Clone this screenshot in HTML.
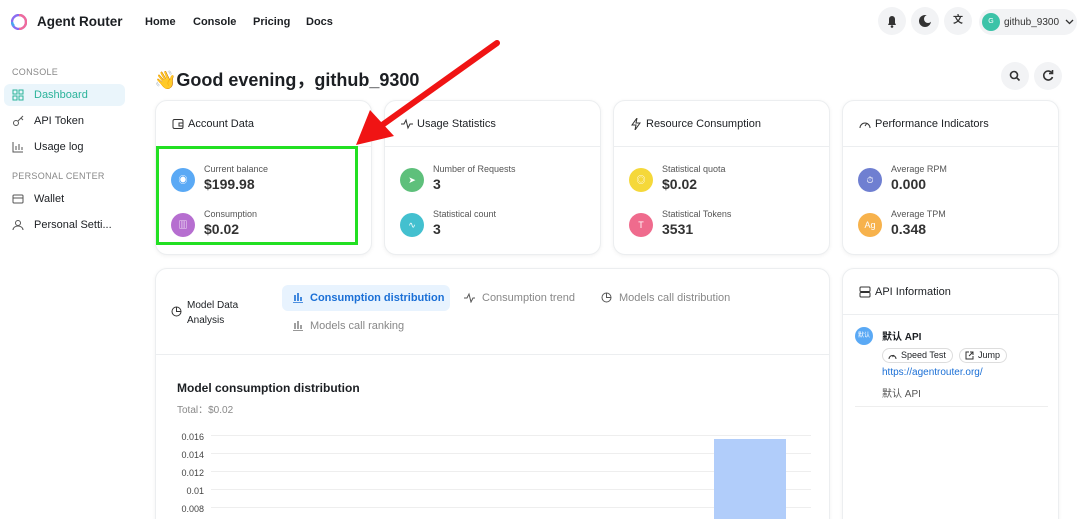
<!DOCTYPE html>
<html><head><meta charset="utf-8"><style>
*{box-sizing:border-box;margin:0;padding:0}
html,body{width:1080px;height:519px;overflow:hidden}
body{background:#fff;font-family:"Liberation Sans","Noto Sans CJK SC",sans-serif;color:#1c1f23;position:relative}
.abs{position:absolute}
.nav a{position:absolute;top:16px;font-size:11px;font-weight:bold;color:#1c1f23}
.side .lbl{position:absolute;left:12px;font-size:9px;color:#888;letter-spacing:.3px}
.side .it{position:absolute;left:4px;width:121px;height:22px;font-size:11px;line-height:22px;padding-left:30px;color:#1c1f23}
.side .it svg{position:absolute;left:8px;top:5px}
.card{position:absolute;background:#fff;border:1px solid #eceef0;border-radius:12px;box-shadow:0 1px 4px rgba(0,0,0,.06)}
.card .hd{height:46px;border-bottom:1px solid #eceef0;font-size:11px;line-height:46px;padding-left:32px;position:relative}
.card .hd svg{position:absolute;left:16px;top:17px}
.row{position:absolute;left:15px}
.ic{position:absolute;left:0;width:24px;height:24px;border-radius:50%;color:#fff;font-size:9px;text-align:center;line-height:24px}
.row .t{position:absolute;left:33px;top:-4px;font-size:9px;color:#555;white-space:nowrap}
.row .v{position:absolute;left:33px;top:8px;font-size:14px;font-weight:bold;color:#333;white-space:nowrap}
.cb{position:absolute;width:28px;height:28px;border-radius:50%;background:#f2f3f5}
.tab{position:absolute;font-size:11px;color:#888;height:26px;line-height:26px;padding-left:28px}
.tab svg{position:absolute;left:10px;top:7px}
</style></head><body>
<svg class="abs" style="left:11px;top:14px" width="16" height="16" viewBox="0 0 16 16"><circle cx="8" cy="8" r="7" fill="none" stroke="#8b6cf0" stroke-width="2.4"/><path d="M8 1a7 7 0 0 1 0 14" fill="none" stroke="#f06a9b" stroke-width="2.4"/><path d="M3 12a7 7 0 0 1-2-4" fill="none" stroke="#4aa6f0" stroke-width="2.4"/></svg>
<div class="abs" style="left:37px;top:14px;font-size:13.5px;font-weight:bold;color:#1c1f23">Agent Router</div>
<div class="nav"><a style="left:145px">Home</a><a style="left:193px">Console</a><a style="left:253px">Pricing</a><a style="left:306px">Docs</a></div>
<div class="cb" style="left:878px;top:7px"><svg width="28" height="28"><path d="M10 18h8l-1-2v-4a3 3 0 0 0-6 0v4z" fill="#333"/><circle cx="14" cy="19.5" r="1.3" fill="#333"/></svg></div>
<div class="cb" style="left:911px;top:7px"><svg width="28" height="28"><circle cx="14" cy="14" r="6" fill="#333"/><circle cx="17" cy="12" r="4" fill="#f2f3f5"/></svg></div>
<div class="cb" style="left:944px;top:7px;font-size:10px;text-align:center;line-height:28px;font-weight:bold;color:#333">文</div>
<div class="abs" style="left:979px;top:9px;width:98px;height:26px;border-radius:13px;background:#f2f3f5"></div>
<div class="abs" style="left:982px;top:13px;width:18px;height:18px;border-radius:50%;background:#3cc3a8;color:#fff;font-size:7px;text-align:center;line-height:18px">G</div>
<div class="abs" style="left:1004px;top:17px;font-size:10px;color:#333">github_9300</div>
<svg class="abs" style="left:1065px;top:19px" width="9" height="6"><path d="M1 1l3.5 3.5L8 1" fill="none" stroke="#333" stroke-width="1.3"/></svg>
<div class="side">
<div class="lbl" style="top:67px">CONSOLE</div>
<div class="it" style="top:84px;background:#eaf5fb;border-radius:6px;color:#2bb39a"><svg width="12" height="12"><rect x="1" y="1" width="4" height="4" fill="none" stroke="#2bb39a"/><rect x="7" y="1" width="4" height="4" fill="none" stroke="#2bb39a"/><rect x="1" y="7" width="4" height="4" fill="none" stroke="#2bb39a"/><rect x="7" y="7" width="4" height="4" fill="none" stroke="#2bb39a"/></svg>Dashboard</div>
<div class="it" style="top:110px"><svg width="12" height="12"><circle cx="4" cy="8" r="2.5" fill="none" stroke="#555"/><path d="M6 6l5-5M9 3l2 2" stroke="#555" fill="none"/></svg>API Token</div>
<div class="it" style="top:136px"><svg width="12" height="12"><path d="M1 1v10h10M4 9V5M7 9V3M10 9V6" stroke="#555" fill="none"/></svg>Usage log</div>
<div class="lbl" style="top:171px">PERSONAL CENTER</div>
<div class="it" style="top:188px"><svg width="12" height="12"><rect x="1" y="2" width="10" height="8" rx="1" fill="none" stroke="#555"/><path d="M1 5h10" stroke="#555"/></svg>Wallet</div>
<div class="it" style="top:214px"><svg width="12" height="12"><circle cx="6" cy="4" r="2.5" fill="none" stroke="#555"/><path d="M1 11a5 4 0 0 1 10 0" fill="none" stroke="#555"/></svg>Personal Setti...</div>
</div>
<div class="abs" style="left:154px;top:66px;font-size:18px;font-weight:bold">👋Good evening，github_9300</div>
<div class="cb" style="left:1001px;top:62px"><svg width="28" height="28"><circle cx="13" cy="13" r="3.5" fill="none" stroke="#333" stroke-width="1.6"/><path d="M15.5 15.5l3 3" stroke="#333" stroke-width="1.6"/></svg></div>
<div class="cb" style="left:1034px;top:62px"><svg width="28" height="28"><path d="M18 11a4.5 4.5 0 1 0 .5 4" fill="none" stroke="#333" stroke-width="1.6"/><path d="M18.5 8v3.5H15" fill="none" stroke="#333" stroke-width="1.6"/></svg></div>
<div class="card" style="left:155px;top:100px;width:217px;height:155px"><div class="hd"><svg width="12" height="12"><rect x="1" y="1.5" width="10" height="9" rx="1.5" fill="none" stroke="#333"/><path d="M7 5h4v3H7z" fill="none" stroke="#333"/></svg>Account Data</div>
<div class="row" style="top:67px"><div class="ic" style="background:#5aa9f5">◉</div><div class="t">Current balance</div><div class="v">$199.98</div></div>
<div class="row" style="top:112px"><div class="ic" style="background:#b66ed0">▥</div><div class="t">Consumption</div><div class="v">$0.02</div></div></div>
<div class="card" style="left:384px;top:100px;width:217px;height:155px"><div class="hd"><svg width="12" height="12"><path d="M0 6h3l2-4 2 8 2-4h3" fill="none" stroke="#333"/></svg>Usage Statistics</div>
<div class="row" style="top:67px"><div class="ic" style="background:#5ec07b">➤</div><div class="t">Number of Requests</div><div class="v">3</div></div>
<div class="row" style="top:112px"><div class="ic" style="background:#43c0cf">∿</div><div class="t">Statistical count</div><div class="v">3</div></div></div>
<div class="card" style="left:613px;top:100px;width:217px;height:155px"><div class="hd"><svg width="12" height="12"><path d="M7 0L2 7h4l-1 5 5-7H6z" fill="none" stroke="#333"/></svg>Resource Consumption</div>
<div class="row" style="top:67px"><div class="ic" style="background:#f5d83a">◎</div><div class="t">Statistical quota</div><div class="v">$0.02</div></div>
<div class="row" style="top:112px"><div class="ic" style="background:#ef6b8d">T</div><div class="t">Statistical Tokens</div><div class="v">3531</div></div></div>
<div class="card" style="left:842px;top:100px;width:217px;height:155px"><div class="hd"><svg width="12" height="12"><path d="M1 10a5 5 0 1 1 10 0M6 8l2-3" fill="none" stroke="#333"/></svg>Performance Indicators</div>
<div class="row" style="top:67px"><div class="ic" style="background:#6f7fd1">⏱</div><div class="t">Average RPM</div><div class="v">0.000</div></div>
<div class="row" style="top:112px"><div class="ic" style="background:#f7b24c">Ag</div><div class="t">Average TPM</div><div class="v">0.348</div></div></div>
<div class="card" style="left:155px;top:268px;width:675px;height:270px">
<div style="height:86px;border-bottom:1px solid #eceef0;position:relative">
<svg class="abs" style="left:15px;top:37px" width="11" height="11"><circle cx="5.5" cy="5.5" r="4.5" fill="none" stroke="#333"/><path d="M5.5 1v4.5H10" fill="none" stroke="#333"/></svg>
<div class="abs" style="left:31px;top:29px;font-size:10px;line-height:15px">Model Data<br>Analysis</div>
<div class="tab" style="left:126px;top:16px;width:168px;background:#e8f3fe;border-radius:6px;color:#1a6fd6;font-weight:bold"><svg width="11" height="11"><path d="M1 11h10M3 9V3M6 9V1M9 9V5" stroke="#1a6fd6" stroke-width="1.6"/></svg>Consumption distribution</div>
<div class="tab" style="left:298px;top:16px"><svg width="11" height="11"><path d="M0 6h3l2-4 2 8 2-4h2" fill="none" stroke="#555"/></svg>Consumption trend</div>
<div class="tab" style="left:435px;top:16px"><svg width="11" height="11"><circle cx="5.5" cy="5.5" r="4.5" fill="none" stroke="#555"/><path d="M5.5 1v4.5H10" fill="none" stroke="#555"/></svg>Models call distribution</div>
<div class="tab" style="left:126px;top:44px"><svg width="11" height="11"><path d="M1 11h10M3 9V3M6 9V1M9 9V5" stroke="#777" stroke-width="1.4"/></svg>Models call ranking</div>
</div>
<div class="abs" style="left:21px;top:112px;font-size:12px;font-weight:bold">Model consumption distribution</div>
<div class="abs" style="left:21px;top:132px;font-size:10px;color:#888">Total：$0.02</div>
<div class="abs" style="left:0;top:159px;width:48px;font-size:9px;color:#444;text-align:right;line-height:18px">0.016<br>0.014<br>0.012<br>0.01<br>0.008</div>
<div class="abs" style="left:55px;top:166px;width:600px;height:1px;background:#eee"></div>
<div class="abs" style="left:55px;top:184px;width:600px;height:1px;background:#eee"></div>
<div class="abs" style="left:55px;top:202px;width:600px;height:1px;background:#eee"></div>
<div class="abs" style="left:55px;top:220px;width:600px;height:1px;background:#eee"></div>
<div class="abs" style="left:55px;top:238px;width:600px;height:1px;background:#eee"></div>
<div class="abs" style="left:558px;top:170px;width:72px;height:90px;background:#b1cdfa"></div>
</div>
<div class="card" style="left:842px;top:268px;width:217px;height:270px">
<div class="hd" style="height:46px"><svg width="12" height="12"><rect x="1" y="1" width="10" height="4.5" rx="1" fill="none" stroke="#333"/><rect x="1" y="6.5" width="10" height="4.5" rx="1" fill="none" stroke="#333"/></svg>API Information</div>
<div class="abs" style="left:12px;top:58px;width:18px;height:18px;border-radius:50%;background:#5aa9f5;color:#fff;font-size:6px;text-align:center;line-height:18px">默认</div>
<div class="abs" style="left:39px;top:59px;font-size:10px;font-weight:bold">默认 API</div>
<div class="abs" style="left:39px;top:79px;height:15px;padding:0 6px 0 18px;border:1px solid #ddd;border-radius:8px;font-size:9px;line-height:13px">Speed Test<svg class="abs" style="left:5px;top:2px" width="9" height="9"><path d="M1 8a3.5 3.5 0 1 1 7 0M4.5 6l1.5-2" fill="none" stroke="#333"/></svg></div>
<div class="abs" style="left:116px;top:79px;height:15px;padding:0 6px 0 18px;border:1px solid #ddd;border-radius:8px;font-size:9px;line-height:13px">Jump<svg class="abs" style="left:5px;top:2px" width="9" height="9"><path d="M4 1H1v7h7V5M5 1h3v3M8 1L4 5" fill="none" stroke="#333"/></svg></div>
<div class="abs" style="left:39px;top:98px;font-size:10px;color:#1a6fd6">https://agentrouter.org/</div>
<div class="abs" style="left:39px;top:116px;font-size:10px;color:#555">默认 API</div>
<div class="abs" style="left:12px;top:137px;width:193px;height:1px;background:#eee"></div>
</div>
<div class="abs" style="left:156px;top:146px;width:202px;height:99px;border:3px solid #22e022"></div>
<svg class="abs" style="left:0;top:0" width="1080" height="519"><path d="M497 43L378 128" stroke="#f01414" stroke-width="6" stroke-linecap="round"/><path d="M356 145L370 110L394 136Z" fill="#f01414"/></svg>
</body></html>
